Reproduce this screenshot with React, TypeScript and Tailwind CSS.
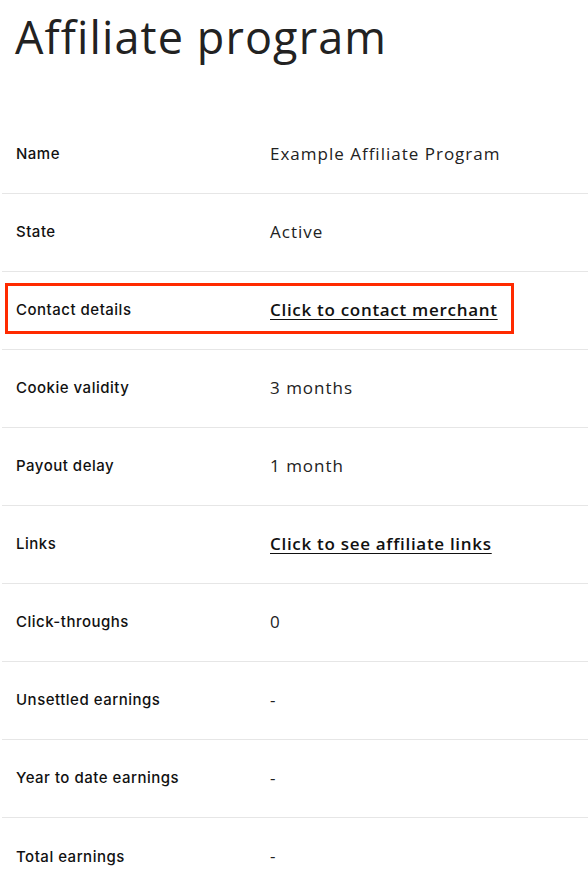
const rows: { label: string; value: string; link?: boolean; marked?: boolean }[] = [
  { label: "Name", value: "Example Affiliate Program" },
  { label: "State", value: "Active" },
  { label: "Contact details", value: "Click to contact merchant", link: true, marked: true },
  { label: "Cookie validity", value: "3 months" },
  { label: "Payout delay", value: "1 month" },
  { label: "Links", value: "Click to see affiliate links", link: true },
  { label: "Click-throughs", value: "0" },
  { label: "Unsettled earnings", value: "-" },
  { label: "Year to date earnings", value: "-" },
  { label: "Total earnings", value: "-" },
];

export default function App() {
  return (
    <div className="w-[588px] h-[890px] overflow-hidden bg-white font-['Open_Sans',sans-serif] text-[#222]">
      <h1 className="pl-[15px] pt-[5px] h-[116px] text-[45px] leading-[64px] font-normal tracking-[1.1px] text-[#222]">
        Affiliate program
      </h1>

      <div className="ml-[2px]">
        {rows.map((row, i) => (
          <div
            key={row.label}
            className={`relative grid grid-cols-[254px_1fr] items-center h-[78px] ${
              i < rows.length - 1 ? "border-b border-[#e6e6e6]" : ""
            }`}
          >
            <div className="pl-[14px] font-['Inter',sans-serif] text-[15px] font-medium tracking-[0.5px] text-[#111]">
              {row.label}
            </div>
            <div className="pl-[14px] pb-[2px] text-[17px] tracking-[1px] text-[#222]">
              {row.link ? (
                <a href="#" className="font-semibold tracking-[0.7px] text-[#111] underline underline-offset-[3px]">
                  {row.value}
                </a>
              ) : (
                row.value
              )}
            </div>
            {row.marked && (
              <div className="absolute left-[3px] top-[11px] w-[509px] h-[51px] border-[3px] border-[#ff2a00]" />
            )}
          </div>
        ))}
      </div>
    </div>
  );
}
